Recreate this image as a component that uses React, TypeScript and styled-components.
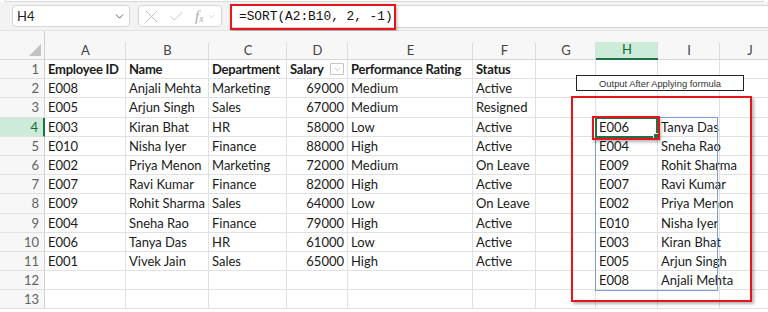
import { createGlobalStyle } from "styled-components";
import styled from "styled-components";
import { ChevronDown, X, Check } from "lucide-react";

const GlobalStyle = createGlobalStyle`
    html, body {
        margin: 0;
        padding: 0;
        background: #ffffff;
        overflow: hidden;
    }
    body {
        font-family: Lato, "Liberation Sans", Arial, sans-serif;
        color: #1a1a1a;
    }
`;

const COLS = [81, 83, 78, 61, 125, 63, 60, 62, 62, 60];
const LETTERS = ["A", "B", "C", "D", "E", "F", "G", "H", "I", "J"];
const ROW_H = 19.2;

type Row = (string | number | null)[];

const headers = ["Employee ID", "Name", "Department", "Salary", "Performance Rating", "Status"];

const data: Row[] = [
    ["E008", "Anjali Mehta", "Marketing", 69000, "Medium", "Active"],
    ["E005", "Arjun Singh", "Sales", 67000, "Medium", "Resigned"],
    ["E003", "Kiran Bhat", "HR", 58000, "Low", "Active"],
    ["E010", "Nisha Iyer", "Finance", 88000, "High", "Active"],
    ["E002", "Priya Menon", "Marketing", 72000, "Medium", "On Leave"],
    ["E007", "Ravi Kumar", "Finance", 82000, "High", "Active"],
    ["E009", "Rohit Sharma", "Sales", 64000, "Low", "On Leave"],
    ["E004", "Sneha Rao", "Finance", 79000, "High", "Active"],
    ["E006", "Tanya Das", "HR", 61000, "Low", "Active"],
    ["E001", "Vivek Jain", "Sales", 65000, "High", "Active"],
];

// SORT(A2:B10, 2, -1) spill, starting at H4
const spill: [string, string][] = [
    ["E006", "Tanya Das"],
    ["E004", "Sneha Rao"],
    ["E009", "Rohit Sharma"],
    ["E007", "Ravi Kumar"],
    ["E002", "Priya Menon"],
    ["E010", "Nisha Iyer"],
    ["E003", "Kiran Bhat"],
    ["E005", "Arjun Singh"],
    ["E008", "Anjali Mehta"],
];

const buildRows = (): Row[] => {
    const rows: Row[] = [];
    for (let r = 1; r <= 13; r++) {
        const row: Row = new Array(10).fill(null);
        if (r === 1) headers.forEach((h, i) => (row[i] = h));
        else if (r <= 11) data[r - 2].forEach((v, i) => (row[i] = v));
        const s = spill[r - 4];
        if (s) {
            row[7] = s[0];
            row[8] = s[1];
        }
        rows.push(row);
    }
    return rows;
};

export default function App() {
    const rows = buildRows();
    return (
        <>
            <GlobalStyle />
            <RibbonEdge />
            <FormulaBar>
                <NameBox>
                    <span>H4</span>
                    <ChevronDown size={13} strokeWidth={1.6} color="#444" />
                </NameBox>
                <FxBox>
                    <X size={21} strokeWidth={1} color="#b8b8b8" />
                    <Check size={17} strokeWidth={1.1} color="#b8b8b8" />
                    <FxLabel>
                        f<sub>x</sub>
                    </FxLabel>
                    <ChevronDown size={9} strokeWidth={1.6} color="#b8b8b8" />
                </FxBox>
                <FormulaInput>
                    <FormulaText>=SORT(A2:B10, 2, -1)</FormulaText>
                    <RedHighlight />
                </FormulaInput>
            </FormulaBar>
            <Sheet>
                <Corner>
                    <SelectAll />
                </Corner>
                {LETTERS.map((l) => (
                    <ColHeader key={l} $active={l === "H"}>
                        {l}
                    </ColHeader>
                ))}
                {rows.map((row, ri) => (
                    <RowFragment key={ri} index={ri + 1} row={row} />
                ))}

                <ShapeLabel>Output After Applying formula</ShapeLabel>
                <RedFrame />
                <SpillBorder />
                <ActiveCell>
                    <FillHandle />
                </ActiveCell>
                <RedCellFrame />
            </Sheet>
        </>
    );
}

const RowFragment = ({ index, row }: { index: number; row: Row }) => (
    <>
        <RowHeader $active={index === 4}>{index}</RowHeader>
        {row.map((v, ci) => {
            const numeric = typeof v === "number";
            return (
                <Cell key={ci} $right={numeric} $bold={index === 1}>
                    {v !== null && <span>{v}</span>}
                    {index === 1 && ci === 3 && (
                        <FilterButton>
                            <ChevronDown size={9} strokeWidth={1.4} color="#888" />
                        </FilterButton>
                    )}
                </Cell>
            );
        })}
    </>
);

/* -------------------- Formula bar -------------------- */

const RibbonEdge = styled.div`
    height: 1px;
    margin: 0 4px;
    border: 1px solid #d9d9d9;
    border-top: none;
    border-radius: 0 0 4px 4px;
    background: #fff;
`;

const FormulaBar = styled.div`
    height: 29px;
    background: #f3f3f3;
    display: flex;
    align-items: center;
    padding: 0 0 0 12px;
    gap: 8px;
    border-bottom: 1px solid #e3e3e3;
    box-sizing: border-box;
`;

const NameBox = styled.div`
    width: 118px;
    height: 22px;
    box-sizing: border-box;
    background: #fff;
    border: 1px solid #d6d6d6;
    border-radius: 4px;
    display: flex;
    align-items: center;
    justify-content: space-between;
    padding: 0 3px 0 4px;
    font-size: 13px;
    color: #1f1f1f;
`;

const FxBox = styled.div`
    width: 84px;
    height: 22px;
    box-sizing: border-box;
    background: #fff;
    border: 1px solid #d6d6d6;
    border-radius: 4px;
    display: flex;
    align-items: center;
    padding: 0 4px 0 2px;
    gap: 6px;
    & > svg:last-child {
        margin-left: -3px;
    }
`;

const FxLabel = styled.span`
    margin-left: 4px;
    font-family: "Liberation Serif", serif;
    font-style: italic;
    font-size: 15px;
    color: #a8a8a8;
    line-height: 1;
    sub {
        font-size: 10px;
        vertical-align: -1px;
    }
`;

const FormulaInput = styled.div`
    position: relative;
    flex: 1;
    height: 23px;
    background: #fff;
    border: 1px solid #d6d6d6;
    border-right: none;
    box-sizing: border-box;
    display: flex;
    align-items: center;
    padding-left: 8px;
`;

const FormulaText = styled.span`
    font-family: "Liberation Mono", "DejaVu Sans Mono", monospace;
    font-size: 12.8px;
    color: #111;
`;

const RedHighlight = styled.div`
    position: absolute;
    left: -1px;
    top: -2px;
    width: 166px;
    height: 26px;
    box-sizing: border-box;
    border: 2px solid #e8141c;
    box-shadow: 1px 2px 3px rgba(0, 0, 0, 0.3);
`;

/* -------------------- Sheet -------------------- */

const Sheet = styled.div`
    position: relative;
    display: grid;
    grid-template-columns: 45px ${COLS.map((c) => `${c}px`).join(" ")};
    grid-template-rows: 29px repeat(13, ${ROW_H}px);
    background: #fff;
    font-size: 13px;
`;

const Corner = styled.div`
    position: relative;
    background: #f7f7f7;
    border-right: 1px solid #cfcfcf;
    border-bottom: 1px solid #d6d6d6;
`;

const SelectAll = styled.div`
    position: absolute;
    right: 3px;
    bottom: 3px;
    width: 0;
    height: 0;
    border-left: 12px solid transparent;
    border-bottom: 12px solid #c2c2c2;
`;

const ColHeader = styled.div<{ $active?: boolean }>`
    position: relative;
    isolation: isolate;
    display: flex;
    align-items: flex-end;
    justify-content: center;
    padding-bottom: 1px;
    box-sizing: border-box;
    font-size: 13px;
    line-height: 16px;
    color: ${({ $active }) => ($active ? "#0f6b3b" : "#444")};
    background: #f7f7f7;
    border-bottom: ${({ $active }) => ($active ? "2px solid #1e7145" : "1px solid #d6d6d6")};
    &::before {
        content: "";
        position: absolute;
        left: 0;
        right: 0;
        top: 11px;
        bottom: 0;
        background: ${({ $active }) => ($active ? "#cdebd9" : "transparent")};
        border-right: 1px solid #dcdcdc;
        z-index: -1;
    }
`;

const RowHeader = styled.div<{ $active?: boolean }>`
    display: flex;
    align-items: center;
    justify-content: flex-end;
    padding-right: 5px;
    box-sizing: border-box;
    font-size: 13px;
    color: ${({ $active }) => ($active ? "#0f6b3b" : "#616161")};
    background: ${({ $active }) => ($active ? "#cdebd9" : "#f7f7f7")};
    border-right: ${({ $active }) => ($active ? "2px solid #1e7145" : "1px solid #cfcfcf")};
    border-bottom: 1px solid #e1e1e1;
`;

const Cell = styled.div<{ $right?: boolean; $bold?: boolean }>`
    display: flex;
    align-items: center;
    justify-content: ${({ $right, $bold }) => ($right ? "flex-end" : $bold ? "space-between" : "flex-start")};
    padding: 0 3px;
    box-sizing: border-box;
    white-space: nowrap;
    overflow: visible;
    font-weight: ${({ $bold }) => ($bold ? 700 : 400)};
    letter-spacing: ${({ $bold }) => ($bold ? "-0.25px" : "0")};
    border-right: 1px solid #e1e1e1;
    border-bottom: 1px solid #e1e1e1;
    min-width: 0;
`;

const FilterButton = styled.div`
    width: 14px;
    height: 12px;
    box-sizing: border-box;
    border: 1px solid #c4c4c4;
    border-radius: 1px;
    display: flex;
    align-items: center;
    justify-content: center;
    background: #fff;
`;

/* -------------------- Overlays -------------------- */

const ShapeLabel = styled.div`
    position: absolute;
    left: 576px;
    top: 44px;
    width: 168px;
    height: 16px;
    box-sizing: border-box;
    border: 1px solid #222;
    background: #fff;
    display: flex;
    align-items: center;
    justify-content: center;
    font-family: "Liberation Sans", Arial, sans-serif;
    font-size: 9.4px;
    color: #333;
`;

const RedFrame = styled.div`
    position: absolute;
    left: 571px;
    top: 65px;
    width: 181px;
    height: 206px;
    box-sizing: border-box;
    border: 2px solid #e8141c;
    box-shadow: 2px 2px 3px rgba(0, 0, 0, 0.3);
`;

const SpillBorder = styled.div`
    position: absolute;
    left: 595px;
    top: 86px;
    width: 123px;
    height: 174px;
    box-sizing: border-box;
    border: 1px solid #7d9fd8;
`;

const ActiveCell = styled.div`
    position: absolute;
    left: 595px;
    top: 86px;
    width: 63px;
    height: 21px;
    box-sizing: border-box;
    border: 2px solid #1e7145;
`;

const FillHandle = styled.div`
    position: absolute;
    right: -4px;
    bottom: -4px;
    width: 5px;
    height: 5px;
    background: #1e7145;
    border: 1px solid #fff;
`;

const RedCellFrame = styled.div`
    position: absolute;
    left: 592px;
    top: 85px;
    width: 68px;
    height: 24px;
    box-sizing: border-box;
    border: 2px solid #e8141c;
    box-shadow: 1px 2px 3px rgba(0, 0, 0, 0.3);
`;
